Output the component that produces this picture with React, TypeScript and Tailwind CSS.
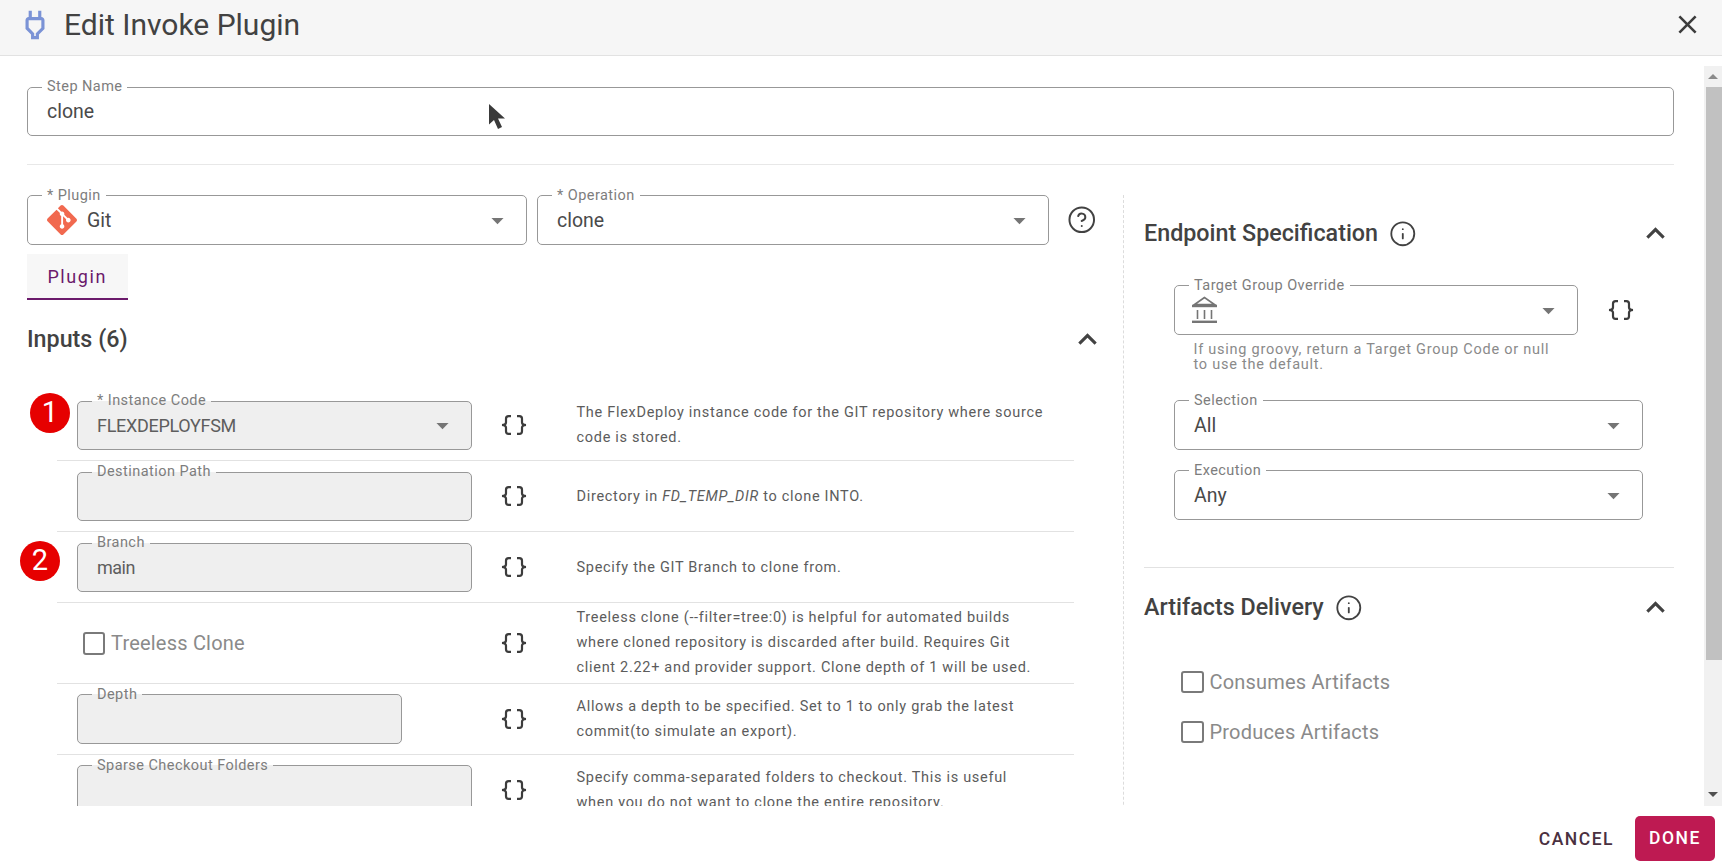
import React from "react";
import { MdOutlinePower, MdClose, MdExpandLess, MdArrowDropDown } from "react-icons/md";
import { SiGit } from "react-icons/si";
import { Info, CircleHelp } from "lucide-react";

function Braces() {
  return (
    <svg width="26" height="20" viewBox="0 0 26 20" fill="none" stroke="#3c3c3c" strokeWidth="2.2" className="shrink-0">
      <path d="M10 1.2H7.6C6 1.2 5 2.2 5 3.8V7.4C5 9 3.6 9.9 1 10C3.6 10.1 5 11 5 12.6V16.2C5 17.8 6 18.8 7.6 18.8H10" />
      <path d="M16 1.2H18.4C20 1.2 21 2.2 21 3.8V7.4C21 9 22.4 9.9 25 10C22.4 10.1 21 11 21 12.6V16.2C21 17.8 20 18.8 18.4 18.8H16" />
    </svg>
  );
}

function Bank() {
  return (
    <svg width="25" height="27" viewBox="0 0 25 27" fill="none" stroke="#757575" className="shrink-0">
      <path d="M12.5 1.5L2.5 8.5H22.5Z" strokeWidth="1.6" />
      <path d="M0 10H25" strokeWidth="2.4" />
      <path d="M5.5 14V23M12.5 14V23M19.5 14V23" strokeWidth="1.6" />
      <path d="M0 25.8H25" strokeWidth="2.4" />
    </svg>
  );
}

function Field({ label, value, icon, select, disabled, width, valueClass }: { label: string; value?: string; icon?: React.ReactNode; select?: boolean; disabled?: boolean; width: string; valueClass?: string }) {
  return (
    <fieldset className={`${width} h-[50px] shrink-0 border border-[#989898] rounded-[5px] min-w-0 ${disabled ? "bg-[#efefef]" : "bg-white"}`}>
      <legend className="ml-[14px] px-[5px] h-[2px] leading-[1px] text-[14.5px] tracking-[0.45px] text-[#7d7d7d]">{label}</legend>
      <div className="flex items-center h-[47.5px] pl-[19px] pr-[14px]">
        {icon}
        <span className={`flex-1 ${disabled ? "text-[#5e5e5e]" : "text-[#4a4a4a]"} ${valueClass ?? "text-[19.5px]"}`}>{value}</span>
        {select && <MdArrowDropDown size={29} className="text-[#757575] shrink-0" />}
      </div>
    </fieldset>
  );
}

function Check({ label }: { label: string }) {
  return (
    <div className="flex items-center gap-[6px]">
      <span className="w-[22.5px] h-[22.5px] border-2 border-[#7a7a7a] rounded-[3px] shrink-0" />
      <span className="text-[20px] tracking-[0.2px] text-[#8a8a8a]">{label}</span>
    </div>
  );
}

function Row({ left, text, h }: { left: React.ReactNode; text: React.ReactNode; h: string }) {
  return (
    <div className={`${h} flex items-center pl-[20px] border-b border-[#e2e2e2] shrink-0`}>
      <div className="w-[395px] shrink-0">{left}</div>
      <div className="w-[104.5px] pl-[29px] shrink-0"><Braces /></div>
      <div className="w-[470px] text-[14.5px] leading-[25px] tracking-[0.7px] text-[#5c5c5c]">{text}</div>
    </div>
  );
}

function SectionHead({ title, info }: { title: string; info?: boolean }) {
  return (
    <div className="flex items-center">
      <span className="text-[23.3px] font-medium text-[#424242]">{title}</span>
      {info && <Info size={27.6} strokeWidth={1.6} className="ml-[11px] text-[#424242]" />}
    </div>
  );
}

export default function App() {
  return (
    <div className="relative w-[1722px] h-[864px] overflow-hidden bg-white flex flex-col [font-family:Roboto,sans-serif]">
      <header className="h-[56px] shrink-0 bg-[#f6f6f6] border-b border-[#e2e2e2] flex items-center pl-[16px] pr-[19.5px] pb-[6px]">
        <MdOutlinePower size={38} className="text-[#7b93d6] shrink-0" />
        <h1 className="ml-[10px] flex-1 text-[30px] text-[#424242]">Edit Invoke Plugin</h1>
        <MdClose size={31} className="text-[#3c3c3c]" />
      </header>

      <div className="flex flex-1 min-h-0">
        <main className="w-[1704px] shrink-0 overflow-hidden pl-[27px] pr-[30px] pt-[30px]">
          <Field label="Step Name" value="clone" width="w-[1647px]" />
          <div className="mt-[28px] h-px bg-[#e8e8e8]" />
          <div className="mt-[29.5px] flex">
            <div className="w-[1096.5px] shrink-0 border-r border-dashed border-[#dcdcdc] h-[700px]">
              <div className="flex items-center">
                <Field label="* Plugin" value="Git" select width="w-[499.5px]" icon={<SiGit size={30} className="text-[#f1694f] mr-[10px] shrink-0" />} />
                <div className="ml-[10.5px]">
                  <Field label="* Operation" value="clone" select width="w-[512px]" />
                </div>
                <CircleHelp size={29.5} strokeWidth={1.6} className="ml-[18px] text-[#424242]" />
              </div>
              <div className="mt-[9.5px] w-[100.5px] h-[46px] bg-[#f7f7f7] border-b-2 border-[#6b1a6b] flex items-center justify-center text-[18px] tracking-[1.6px] text-[#6b1a6b] pt-[1px]">Plugin</div>
              <div className="mt-[24.5px] h-[30px] flex items-center justify-between pr-[16.5px]">
                <SectionHead title="Inputs (6)" />
                <MdExpandLess size={37} className="text-[#424242] -mt-[1px]" />
              </div>
              <div className="mt-[35.5px] ml-[30px] w-[1017px] flex flex-col">
                <Row h="h-[71px]" left={<Field disabled select label="* Instance Code" value="FLEXDEPLOYFSM" valueClass="text-[18px] tracking-[-0.3px]" width="w-full" />} text="The FlexDeploy instance code for the GIT repository where source code is stored." />
                <Row h="h-[71px]" left={<Field disabled label="Destination Path" width="w-full" />} text={<>Directory in <em>FD_TEMP_DIR</em> to clone INTO.</>} />
                <Row h="h-[71px]" left={<Field disabled label="Branch" value="main" valueClass="text-[18px] tracking-[-0.5px]" width="w-full" />} text="Specify the GIT Branch to clone from." />
                <Row h="h-[80.5px]" left={<div className="pl-[5.5px] pt-[1px]"><Check label="Treeless Clone" /></div>} text="Treeless clone (--filter=tree:0) is helpful for automated builds where cloned repository is discarded after build. Requires Git client 2.22+ and provider support. Clone depth of 1 will be used." />
                <Row h="h-[71px]" left={<Field disabled label="Depth" width="w-[325px]" />} text="Allows a depth to be specified. Set to 1 to only grab the latest commit(to simulate an export)." />
                <Row h="h-[71px]" left={<Field disabled label="Sparse Checkout Folders" width="w-full" />} text="Specify comma-separated folders to checkout. This is useful when you do not want to clone the entire repository." />
              </div>
            </div>

            <div className="flex-1 pl-[20.5px]">
              <div className="mt-[24px] h-[30px] flex items-center justify-between">
                <SectionHead title="Endpoint Specification" info />
                <MdExpandLess size={37} className="text-[#424242] -mt-[1px]" />
              </div>
              <div className="mt-[36px] pl-[30px]">
                <div className="flex items-center">
                  <Field label="Target Group Override" select width="w-[404px]" icon={<span className="-ml-[2px] -mt-[2px]"><Bank /></span>} />
                  <div className="ml-[30px]"><Braces /></div>
                </div>
                <p className="mt-[7.5px] ml-[19.5px] w-[360px] text-[14.5px] leading-[15px] tracking-[0.75px] text-[#8a8a8a]">If using groovy, return a Target Group Code or null to use the default.</p>
                <div className="mt-[27.5px]"><Field label="Selection" value="All" select width="w-[469px]" /></div>
                <div className="mt-[20px]"><Field label="Execution" value="Any" select width="w-[469px]" /></div>
              </div>
              <div className="mt-[47px] h-px bg-[#e2e2e2]" />
              <div className="mt-[25px] h-[30px] flex items-center justify-between">
                <SectionHead title="Artifacts Delivery" info />
                <MdExpandLess size={37} className="text-[#424242] -mt-[1px]" />
              </div>
              <div className="mt-[44.5px] pl-[37px] flex flex-col gap-[20px]">
                <Check label="Consumes Artifacts" />
                <Check label="Produces Artifacts" />
              </div>
            </div>
          </div>
        </main>

        <div className="w-[18px] shrink-0 mt-[10px] bg-[#f1f1f1] flex flex-col items-end">
          <div className="h-[21px] w-full flex items-center justify-center"><span className="w-0 h-0 border-x-[5px] border-x-transparent border-b-[5px] border-b-[#8a8a8a]" /></div>
          <div className="w-[16px] h-[573px] bg-[#c1c1c1]" />
          <div className="flex-1" />
          <div className="h-[24px] w-full flex items-center justify-center"><span className="w-0 h-0 border-x-[5px] border-x-transparent border-t-[5px] border-t-[#505050]" /></div>
        </div>
      </div>

      <footer className="h-[58px] shrink-0 flex items-center justify-end pr-[7px] gap-[21px] bg-white">
        <span className="mt-[9px] text-[17.5px] font-medium tracking-[1.5px] text-[#4a3040]">CANCEL</span>
        <span className="w-[80px] h-[45px] mt-[7px] rounded-[5px] bg-[#be1a52] flex items-center justify-center text-[17.5px] font-medium tracking-[1.5px] text-white">DONE</span>
      </footer>

      <span className="absolute left-[30px] top-[393px] w-[40px] h-[40px] rounded-full bg-[#e60000] flex items-center justify-center text-white text-[29px]">1</span>
      <span className="absolute left-[20px] top-[541px] w-[40px] h-[40px] rounded-full bg-[#e60000] flex items-center justify-center text-white text-[29px]">2</span>
      <svg className="absolute left-[488px] top-[103px]" width="18" height="27" viewBox="0 0 18 27"><path d="M1 1V21.5L6 17L10 26L14 24L10 15.5H17Z" fill="#3a3a3a" /></svg>
    </div>
  );
}
